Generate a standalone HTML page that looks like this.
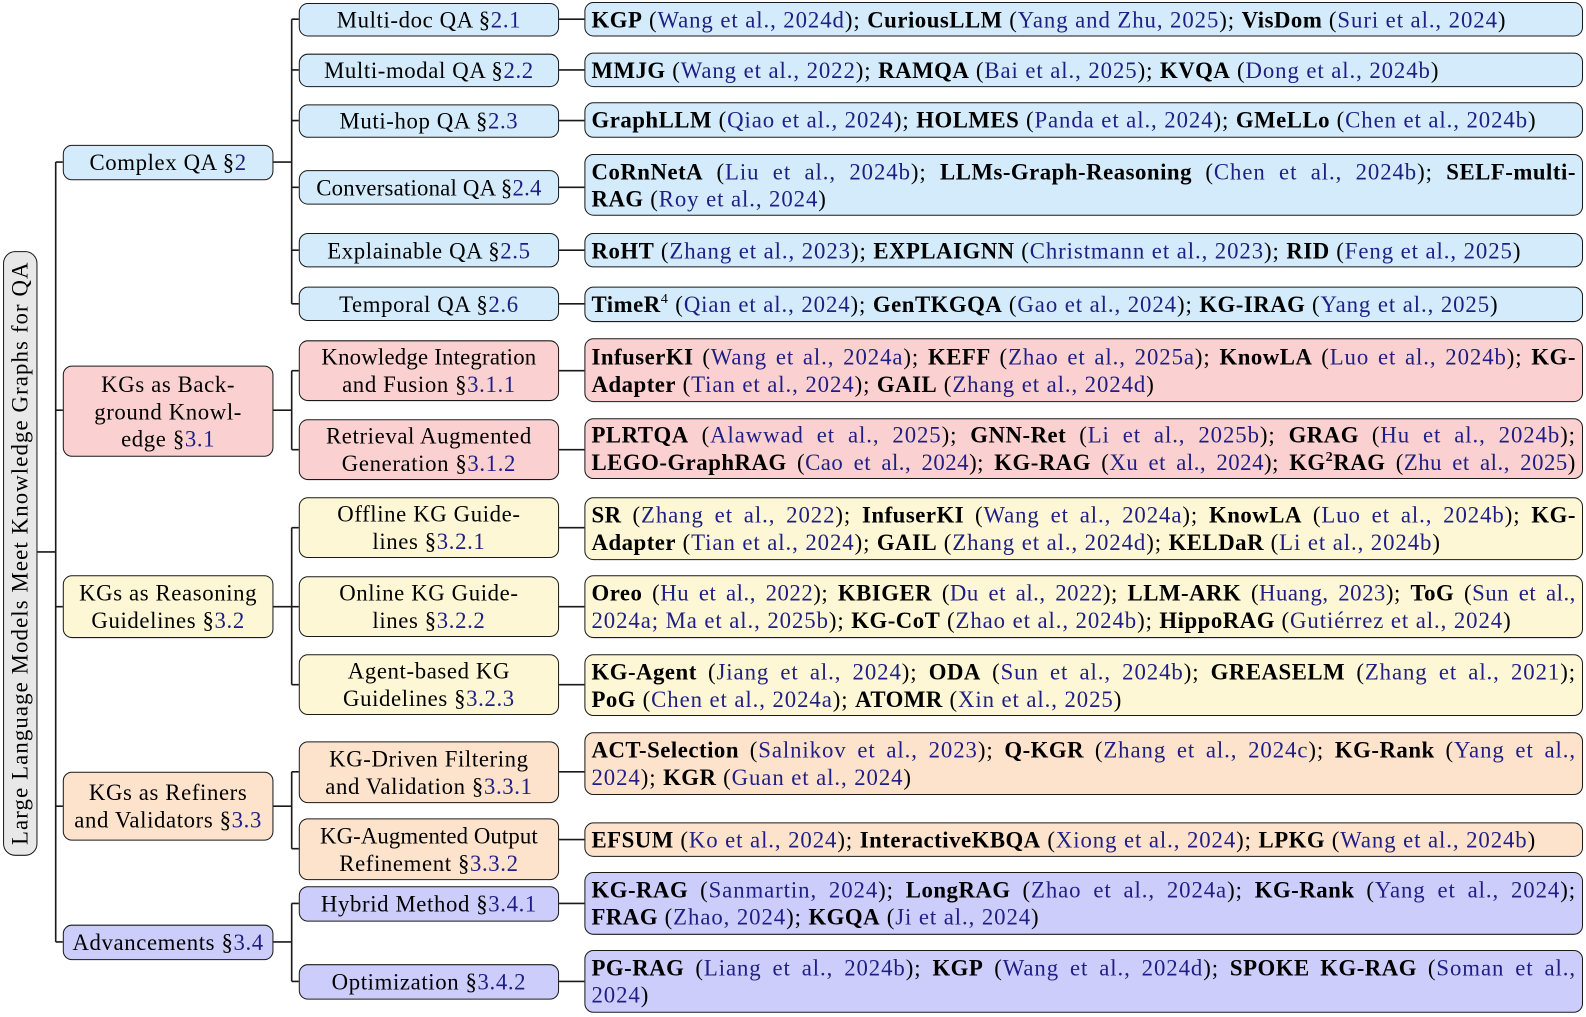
<!DOCTYPE html>
<html><head><meta charset="utf-8"><style>
html,body{margin:0;padding:0;background:#fff;width:1586px;height:1017px;overflow:hidden}
#w{position:absolute;left:0;top:0;width:1566px;height:1004px;transform:scale(1.0128);transform-origin:0 0;font-family:"Liberation Serif",serif;font-size:22.5px;letter-spacing:0.9px;color:#000}
.b{position:absolute;border:1.5px solid #1a1a1a;border-radius:9px;box-sizing:border-box;display:flex;flex-direction:column;justify-content:center;line-height:27px}
.c1{text-align:center;letter-spacing:0.6px}
.c1>div{white-space:nowrap}
.l3{padding:0 6px}
.l3 div{white-space:nowrap}
.l3 .j{text-align:justify;text-align-last:justify}
.c{color:#1e1e85}
b{font-weight:bold;letter-spacing:0.5px}
sup{font-size:14px;line-height:0;vertical-align:9px}
.bl{background:#d3ebfa}.rd{background:#fbd0d0}.yl{background:#fdf7d6}.or{background:#fde3cc}.pu{background:#cdcdfb}
#root{position:absolute;left:3px;top:248px;width:34px;height:597px;border:1.5px solid #1a1a1a;border-radius:12px;box-sizing:border-box;background:#e8e8e8;display:flex;align-items:center;justify-content:center}
#root span{writing-mode:vertical-rl;transform:rotate(180deg);white-space:nowrap;font-size:22.5px;letter-spacing:1.1px}
svg{position:absolute;left:0;top:0}
</style></head><body><div id="w">
<svg width="1566" height="1004" stroke="#1a1a1a" stroke-width="1.6" fill="none">
<path d="M37 545H55M55 160V930M55 160H62M55 405H62M55 599H62M55 796H62M55 930H62"/>
<path d="M270 160H288M288 19V300M288 19H295M288 69H295M288 119H295M288 185H295M288 247H295M288 300H295"/>
<path d="M270 405H288M288 366V444M288 366H295M288 444H295"/>
<path d="M270 599H288M288 521V676M288 521H295M288 599H295M288 676H295"/>
<path d="M270 796H288M288 762V838M288 762H295M288 838H295"/>
<path d="M270 930H288M288 892V969M288 892H295M288 969H295"/>
<path d="M552 19H577M552 69H577M552 119H577M552 185H577M552 247H577M552 300H577M552 366H577M552 444H577M552 521H577M552 599H577M552 676H577M552 762H577M552 829H577M552 892H577M552 969H577"/>
</svg>
<div id="root"><span>Large Language Models Meet Knowledge Graphs for QA</span></div>

<div class="b c1 bl" style="left:62px;top:143px;width:208px;height:35px"><div>Complex QA §<span class="c">2</span></div></div>
<div class="b c1 rd" style="left:62px;top:361px;width:208px;height:90px"><div>KGs as Back-</div><div>ground Knowl-</div><div>edge §<span class="c">3.1</span></div></div>
<div class="b c1 yl" style="left:62px;top:568px;width:208px;height:62px"><div>KGs as Reasoning</div><div>Guidelines §<span class="c">3.2</span></div></div>
<div class="b c1 or" style="left:62px;top:762px;width:208px;height:68px"><div>KGs as Refiners</div><div>and Validators §<span class="c">3.3</span></div></div>
<div class="b c1 pu" style="left:62px;top:913px;width:208px;height:35px"><div>Advancements §<span class="c">3.4</span></div></div>

<div class="b c1 bl" style="left:295px;top:3px;width:257px;height:33px"><div>Multi-doc QA §<span class="c">2.1</span></div></div>
<div class="b c1 bl" style="left:295px;top:53px;width:257px;height:33px"><div>Multi-modal QA §<span class="c">2.2</span></div></div>
<div class="b c1 bl" style="left:295px;top:103px;width:257px;height:33px"><div>Muti-hop QA §<span class="c">2.3</span></div></div>
<div class="b c1 bl" style="left:295px;top:168px;width:257px;height:34px"><div style="letter-spacing:0.2px">Conversational QA §<span class="c">2.4</span></div></div>
<div class="b c1 bl" style="left:295px;top:230px;width:257px;height:34px"><div>Explainable QA §<span class="c">2.5</span></div></div>
<div class="b c1 bl" style="left:295px;top:283px;width:257px;height:34px"><div>Temporal QA §<span class="c">2.6</span></div></div>
<div class="b c1 rd" style="left:295px;top:336px;width:257px;height:60px"><div style="letter-spacing:0.2px">Knowledge Integration</div><div>and Fusion §<span class="c">3.1.1</span></div></div>
<div class="b c1 rd" style="left:295px;top:414px;width:257px;height:60px"><div>Retrieval Augmented</div><div>Generation §<span class="c">3.1.2</span></div></div>
<div class="b c1 yl" style="left:295px;top:491px;width:257px;height:60px"><div>Offline KG Guide-</div><div>lines §<span class="c">3.2.1</span></div></div>
<div class="b c1 yl" style="left:295px;top:569px;width:257px;height:60px"><div>Online KG Guide-</div><div>lines §<span class="c">3.2.2</span></div></div>
<div class="b c1 yl" style="left:295px;top:646px;width:257px;height:60px"><div>Agent-based KG</div><div>Guidelines §<span class="c">3.2.3</span></div></div>
<div class="b c1 or" style="left:295px;top:732px;width:257px;height:61px"><div>KG-Driven Filtering</div><div>and Validation §<span class="c">3.3.1</span></div></div>
<div class="b c1 or" style="left:295px;top:808px;width:257px;height:61px"><div style="letter-spacing:0.1px">KG-Augmented Output</div><div>Refinement §<span class="c">3.3.2</span></div></div>
<div class="b c1 pu" style="left:295px;top:875px;width:257px;height:35px"><div>Hybrid Method §<span class="c">3.4.1</span></div></div>
<div class="b c1 pu" style="left:295px;top:952px;width:257px;height:35px"><div>Optimization §<span class="c">3.4.2</span></div></div>

<div class="b l3 bl" style="left:577px;top:2px;width:986px;height:34px"><div><b>KGP</b> (<span class="c">Wang et al., 2024d</span>); <b>CuriousLLM</b> (<span class="c">Yang and Zhu, 2025</span>); <b>VisDom</b> (<span class="c">Suri et al., 2024</span>)</div></div>
<div class="b l3 bl" style="left:577px;top:52px;width:986px;height:34px"><div><b>MMJG</b> (<span class="c">Wang et al., 2022</span>); <b>RAMQA</b> (<span class="c">Bai et al., 2025</span>); <b>KVQA</b> (<span class="c">Dong et al., 2024b</span>)</div></div>
<div class="b l3 bl" style="left:577px;top:101px;width:986px;height:35px"><div><b>GraphLLM</b> (<span class="c">Qiao et al., 2024</span>); <b>HOLMES</b> (<span class="c">Panda et al., 2024</span>); <b>GMeLLo</b> (<span class="c">Chen et al., 2024b</span>)</div></div>
<div class="b l3 bl" style="left:577px;top:152px;width:986px;height:61px"><div class="j"><b>CoRnNetA</b> (<span class="c">Liu et al., 2024b</span>); <b>LLMs-Graph-Reasoning</b> (<span class="c">Chen et al., 2024b</span>); <b>SELF-multi-</b></div><div><b>RAG</b> (<span class="c">Roy et al., 2024</span>)</div></div>
<div class="b l3 bl" style="left:577px;top:230px;width:986px;height:34px"><div><b>RoHT</b> (<span class="c">Zhang et al., 2023</span>); <b>EXPLAIGNN</b> (<span class="c">Christmann et al., 2023</span>); <b>RID</b> (<span class="c">Feng et al., 2025</span>)</div></div>
<div class="b l3 bl" style="left:577px;top:283px;width:986px;height:35px"><div><b>TimeR</b><sup>4</sup> (<span class="c">Qian et al., 2024</span>); <b>GenTKGQA</b> (<span class="c">Gao et al., 2024</span>); <b>KG-IRAG</b> (<span class="c">Yang et al., 2025</span>)</div></div>
<div class="b l3 rd" style="left:577px;top:334px;width:986px;height:63px"><div class="j"><b>InfuserKI</b> (<span class="c">Wang et al., 2024a</span>); <b>KEFF</b> (<span class="c">Zhao et al., 2025a</span>); <b>KnowLA</b> (<span class="c">Luo et al., 2024b</span>); <b>KG-</b></div><div><b>Adapter</b> (<span class="c">Tian et al., 2024</span>); <b>GAIL</b> (<span class="c">Zhang et al., 2024d</span>)</div></div>
<div class="b l3 rd" style="left:577px;top:413px;width:986px;height:60px"><div class="j"><b>PLRTQA</b> (<span class="c">Alawwad et al., 2025</span>); <b>GNN-Ret</b> (<span class="c">Li et al., 2025b</span>); <b>GRAG</b> (<span class="c">Hu et al., 2024b</span>);</div><div class="j" style="letter-spacing:0.5px"><b>LEGO-GraphRAG</b> (<span class="c">Cao et al., 2024</span>); <b>KG-RAG</b> (<span class="c">Xu et al., 2024</span>); <b>KG<sup>2</sup>RAG</b> (<span class="c">Zhu et al., 2025</span>)</div></div>
<div class="b l3 yl" style="left:577px;top:491px;width:986px;height:62px"><div class="j"><b>SR</b> (<span class="c">Zhang et al., 2022</span>); <b>InfuserKI</b> (<span class="c">Wang et al., 2024a</span>); <b>KnowLA</b> (<span class="c">Luo et al., 2024b</span>); <b>KG-</b></div><div><b>Adapter</b> (<span class="c">Tian et al., 2024</span>); <b>GAIL</b> (<span class="c">Zhang et al., 2024d</span>); <b>KELDaR</b> (<span class="c">Li et al., 2024b</span>)</div></div>
<div class="b l3 yl" style="left:577px;top:568px;width:986px;height:62px"><div class="j" style="letter-spacing:0.5px"><b>Oreo</b> (<span class="c">Hu et al., 2022</span>); <b>KBIGER</b> (<span class="c">Du et al., 2022</span>); <b>LLM-ARK</b> (<span class="c">Huang, 2023</span>); <b>ToG</b> (<span class="c">Sun et al.,</span></div><div><span class="c">2024a; Ma et al., 2025b</span>); <b>KG-CoT</b> (<span class="c">Zhao et al., 2024b</span>); <b>HippoRAG</b> (<span class="c">Gutiérrez et al., 2024</span>)</div></div>
<div class="b l3 yl" style="left:577px;top:646px;width:986px;height:61px"><div class="j"><b>KG-Agent</b> (<span class="c">Jiang et al., 2024</span>); <b>ODA</b> (<span class="c">Sun et al., 2024b</span>); <b>GREASELM</b> (<span class="c">Zhang et al., 2021</span>);</div><div><b>PoG</b> (<span class="c">Chen et al., 2024a</span>); <b>ATOMR</b> (<span class="c">Xin et al., 2025</span>)</div></div>
<div class="b l3 or" style="left:577px;top:723px;width:986px;height:62px"><div class="j"><b>ACT-Selection</b> (<span class="c">Salnikov et al., 2023</span>); <b>Q-KGR</b> (<span class="c">Zhang et al., 2024c</span>); <b>KG-Rank</b> (<span class="c">Yang et al.,</span></div><div><span class="c">2024</span>); <b>KGR</b> (<span class="c">Guan et al., 2024</span>)</div></div>
<div class="b l3 or" style="left:577px;top:812px;width:986px;height:34px"><div><b>EFSUM</b> (<span class="c">Ko et al., 2024</span>); <b>InteractiveKBQA</b> (<span class="c">Xiong et al., 2024</span>); <b>LPKG</b> (<span class="c">Wang et al., 2024b</span>)</div></div>
<div class="b l3 pu" style="left:577px;top:861px;width:986px;height:62px"><div class="j"><b>KG-RAG</b> (<span class="c">Sanmartin, 2024</span>); <b>LongRAG</b> (<span class="c">Zhao et al., 2024a</span>); <b>KG-Rank</b> (<span class="c">Yang et al., 2024</span>);</div><div><b>FRAG</b> (<span class="c">Zhao, 2024</span>); <b>KGQA</b> (<span class="c">Ji et al., 2024</span>)</div></div>
<div class="b l3 pu" style="left:577px;top:938px;width:986px;height:62px"><div class="j"><b>PG-RAG</b> (<span class="c">Liang et al., 2024b</span>); <b>KGP</b> (<span class="c">Wang et al., 2024d</span>); <b>SPOKE KG-RAG</b> (<span class="c">Soman et al.,</span></div><div><span class="c">2024</span>)</div></div>
</div></body></html>
